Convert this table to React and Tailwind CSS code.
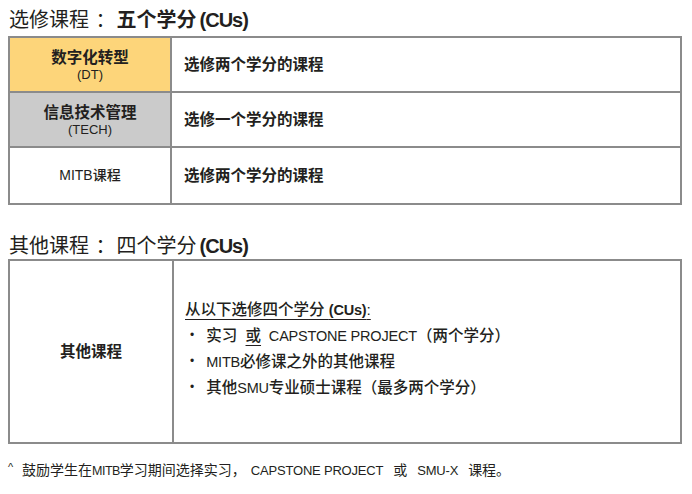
const cjk = { fontFamily: '"Liberation Sans", "Noto Sans CJK SC", sans-serif' };

const Row = ({ left, right, bg, last }) => (
  <div className={`grid grid-cols-[162px_1fr] h-[55px] ${last ? "" : "border-b-2 border-[#8b8b8b]"}`}>
    <div className={`flex flex-col items-center justify-center border-r-2 border-[#8b8b8b] ${bg}`}>{left}</div>
    <div className="flex items-center pl-[12px] text-[15.5px] font-semibold text-[#231f20]">{right}</div>
  </div>
);

const Latin = ({ children, className = "" }) => (
  <span className={`text-[14.5px] tracking-[-0.2px] ${className}`}>{children}</span>
);

const Bullet = ({ children }) => (
  <li className="flex items-center gap-[12px] pl-[5px]">
    <span className="text-[12px]">•</span>
    <span>{children}</span>
  </li>
);

const App = () => {
  return (
    <div className="w-[692px] h-[494px] bg-white text-[#231f20] pt-[7px] pl-[8px] pr-[10px]" style={cjk}>
      <h2 className="pl-[1px] text-[20px] leading-[26px] h-[28px] whitespace-nowrap">
        选修课程 <span className="mx-[1px]">：</span>
        <span className="font-bold">五个学分</span>
        <span className="font-bold text-[20px] tracking-[-1px] ml-[3px]">(CUs)</span>
      </h2>
      <div className="border-2 border-[#8b8b8b] mt-[1px]">
        <Row
          bg="bg-[#fdd57a]"
          left={
            <>
              <div className="text-[15.5px] font-semibold leading-[19px]">数字化转型</div>
              <div className="text-[13px] leading-[15px]">(DT)</div>
            </>
          }
          right="选修两个学分的课程"
        />
        <Row
          bg="bg-[#cbcbcb]"
          left={
            <>
              <div className="text-[15.5px] font-semibold leading-[19px]">信息技术管理</div>
              <div className="text-[13px] leading-[15px]">(TECH)</div>
            </>
          }
          right="选修一个学分的课程"
        />
        <Row
          bg="bg-white"
          last
          left={<div className="text-[14px] font-medium">MITB课程</div>}
          right="选修两个学分的课程"
        />
      </div>

      <h2 className="pl-[1px] mt-[28px] text-[20px] leading-[26px] h-[28px] whitespace-nowrap">
        其他课程 <span className="mx-[1px]">：</span>
        四个学分
        <span className="font-bold text-[20px] tracking-[-1px] ml-[3px]">(CUs)</span>
      </h2>
      <div className="grid grid-cols-[164px_1fr] h-[185px] border-2 border-[#8b8b8b] mt-[-2px]">
        <div className="flex items-center justify-center border-r-2 border-[#8b8b8b] text-[15.5px] font-semibold">
          其他课程
        </div>
        <div className="flex flex-col justify-center pl-[11px] pb-[6px] text-[15.5px] font-medium">
          <div className="leading-[25px]">
            <span className="underline underline-offset-[4px]">
              从以下选修四个学分 <Latin className="font-bold">(CUs)</Latin>:
            </span>
          </div>
          <ul className="leading-[25px]">
            <Bullet>
              实习 <span className="underline underline-offset-[4px] mx-[4px]">或</span>
              <Latin> CAPSTONE PROJECT</Latin>（两个学分）
            </Bullet>
            <Bullet>
              <Latin>MITB</Latin>必修课之外的其他课程
            </Bullet>
            <Bullet>
              其他<Latin>SMU</Latin>专业硕士课程（最多两个学分）
            </Bullet>
          </ul>
        </div>
      </div>

      <p className="mt-[17px] flex text-[14px] leading-[18px] whitespace-nowrap">
        <span className="text-[11px] leading-[12px] w-[14px]">^</span>
        <span>
          鼓励学生在<span className="text-[12.5px] tracking-[-0.5px]">MITB</span>学习期间选择实习，
          <span className="text-[13px] tracking-[-0.2px] ml-[5px]">CAPSTONE PROJECT</span>
          <span className="mx-[10px]">或</span>
          <span className="text-[13px] tracking-[-0.2px]">SMU-X</span>
          <span className="ml-[10px]">课程。</span>
        </span>
      </p>
    </div>
  );
};

export default App;
